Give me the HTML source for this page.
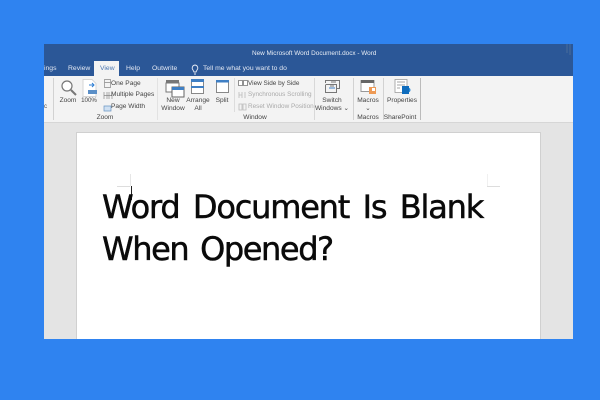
<!DOCTYPE html>
<html><head><meta charset="utf-8">
<style>
html,body{margin:0;padding:0}
body{width:600px;height:400px;overflow:hidden;background:#2f83f0;position:relative;font-family:"Liberation Sans",sans-serif}
div,svg{position:absolute}
.t{white-space:nowrap;font-size:6.6px;color:#444;line-height:8px;filter:blur(.25px)}
.c{text-align:center;transform:translateX(-50%)}
.g{color:#aaa}
.s{background:#d2d2d2;width:1px;top:78px;height:42px}
.tab{color:#e4e9f3;font-size:6.8px;top:65px;white-space:nowrap;line-height:8px;filter:blur(.25px)}
svg{filter:blur(.2px)}
</style></head><body>
<div id="w" style="left:44px;top:44px;width:529px;height:295px;background:#e4e4e4"></div>
<div style="left:44px;top:44px;width:529px;height:32px;background:#2b5797"></div>
<div style="left:566px;top:44px;width:2px;height:9px;background:#3a6299"></div>
<div style="left:569px;top:44px;width:2px;height:11px;background:#3a6299"></div>
<div class="t" style="left:252px;top:49px;color:#e8edf5;font-size:6.4px;line-height:9px">New Microsoft Word Document.docx  -  Word</div>
<div style="left:94px;top:61px;width:25px;height:15px;background:#f3f3f3"></div>
<div class="tab" style="left:44px">ings</div>
<div class="tab" style="left:68px">Review</div>
<div class="tab" style="left:100px;color:#4a76b0">View</div>
<div class="tab" style="left:126px">Help</div>
<div class="tab" style="left:152px">Outwrite</div>
<svg style="left:190px;top:64px" width="10" height="11" viewBox="0 0 10 11"><path d="M5 1a3 3 0 0 0-2 5l1 2h2l1-2a3 3 0 0 0-2-5zM4 10h2" fill="none" stroke="#e4e9f3" stroke-width=".9"/></svg>
<div class="tab" style="left:203px">Tell me what you want to do</div>
<div style="left:44px;top:76px;width:529px;height:46px;background:#f3f3f3;border-bottom:1px solid #d6d6d6"></div>
<div class="t" style="left:44px;top:103px;font-size:6px">c</div>
<div class="s" style="left:53px"></div><div class="s" style="left:157px;background:#e2e2e2"></div><div class="s" style="left:314px;background:#d8d8d8"></div><div class="s" style="left:353px"></div><div class="s" style="left:383px"></div><div class="s" style="left:420px;background:#bbb"></div>
<svg style="left:60px;top:79px" width="18" height="17" viewBox="0 0 18 17"><circle cx="7" cy="7" r="5" fill="#fff" stroke="#777" stroke-width="1.2"/><path d="M11 11l5 5" stroke="#777" stroke-width="2"/></svg>
<div class="t c" style="left:68px;top:97px">Zoom</div>
<svg style="left:82px;top:79px" width="16" height="18" viewBox="0 0 16 18"><path d="M1 .5h9l4 4v13H1z" fill="#fff" stroke="#ccc" stroke-width=".8"/><path d="M7 6h5M10 4l2 2-2 2" fill="none" stroke="#2b7cd3"/><rect x="6" y="11" width="9" height="4" fill="#5b8fc7"/></svg>
<div class="t c" style="left:89px;top:97px;font-size:6.2px">100%</div>
<svg style="left:102px;top:79px" width="12" height="34" viewBox="0 0 12 34"><path d="M2.500.5h6v8h-6zM2.500 3.500h6M2 13v7M5 13v7M7 13v7M10 13v7M2 16.500h8" fill="none" stroke="#888" stroke-width=".7"/><path d="M2 27h7v5H2z" fill="#cfe0f2" stroke="#6a95c4" stroke-width=".7"/></svg>
<div class="t" style="left:111px;top:80px">One Page</div>
<div class="t" style="left:111px;top:91px">Multiple Pages</div>
<div class="t" style="left:111px;top:103px">Page Width</div>
<div class="t c" style="left:105px;top:114px">Zoom</div>
<svg style="left:165px;top:79px" width="20" height="19" viewBox="0 0 20 19"><path d="M1 1h13v3H1z" fill="#777"/><path d="M1 4h13v9H1z" fill="#fff" stroke="#777"/><path d="M7 8h12v10H7z" fill="#fff" stroke="#666"/><path d="M7 8h12v3H7z" fill="#3f7fc4"/></svg>
<div class="t c" style="left:173px;top:97px">New<br>Window</div>
<svg style="left:191px;top:79px" width="14" height="15" viewBox="0 0 14 15"><path d="M.5.500h12v14H.5z" fill="#fff" stroke="#888"/><path d="M0 0h13v3H0zM0 7h13v2H0z" fill="#3f7fc4"/></svg>
<div class="t c" style="left:198px;top:97px">Arrange<br>All</div>
<svg style="left:216px;top:80px" width="13" height="13" viewBox="0 0 13 13"><path d="M.5.500h12v12H.5z" fill="#fff" stroke="#888"/><path d="M0 0h13v2.500H0z" fill="#3f7fc4"/></svg>
<div class="t c" style="left:222px;top:97px">Split</div>
<div class="s" style="left:234px;height:34px;background:#dcdcdc"></div>
<svg style="left:238px;top:80px" width="11" height="32" viewBox="0 0 11 32"><path d="M.5.500h4v5h-4zM5.500.500h4v5h-4z" fill="#fff" stroke="#777" stroke-width=".8"/><path d="M1 12v6M4 12v6M1 15h3M7 12v6M1 24h3v6H1zM5 24h3v6H5z" fill="none" stroke="#bbb" stroke-width=".8"/></svg>
<div class="t" style="left:248px;top:80px;font-size:6.4px">View Side by Side</div>
<div class="t g" style="left:248px;top:91px;font-size:6.4px">Synchronous Scrolling</div>
<div class="t g" style="left:248px;top:103px;font-size:6.4px">Reset Window Position</div>
<div class="t c" style="left:255px;top:114px">Window</div>
<svg style="left:325px;top:80px" width="16" height="13" viewBox="0 0 16 13"><path d="M.5 3V.5h14v8h-3M.5 5v7.500h11v-8h-11M5 6h4M6 2h5" fill="none" stroke="#777"/><path d="M4 8h6" stroke="#3f7fc4"/></svg>
<div class="t c" style="left:332px;top:97px">Switch<br>Windows ⌄</div>
<svg style="left:360px;top:80px" width="18" height="15" viewBox="0 0 18 15"><path d="M1 .5h13v11H1z" fill="#fff" stroke="#999"/><path d="M1 0h13v3H1z" fill="#666"/><rect x="9" y="7" width="7" height="7" fill="#ee9a55"/><rect x="12" y="8" width="3" height="3" fill="#fff"/></svg>
<div class="t c" style="left:368px;top:97px">Macros<br>⌄</div>
<div class="t c" style="left:368px;top:114px">Macros</div>
<svg style="left:394px;top:79px" width="17" height="16" viewBox="0 0 17 16"><path d="M1 .5h12v13H1z" fill="#fff" stroke="#999" stroke-width=".8"/><path d="M3 3h8M3 6h8M3 9h3" stroke="#888" stroke-width=".8"/><circle cx="14" cy="11" r="2.500" fill="#2b8bd8"/><rect x="8" y="7" width="7" height="8" fill="#0f6cbd"/></svg>
<div class="t c" style="left:402px;top:97px">Properties</div>
<div class="t c" style="left:400px;top:114px">SharePoint</div>
<div style="left:76px;top:132px;width:463px;height:206px;background:#fff;border:solid #d0d0d0;border-width:1px 1px 0 1px"></div>
<div style="left:117px;top:186px;width:13px;height:1px;background:#ddd"></div>
<div style="left:130px;top:174px;width:1px;height:12px;background:#e6e6e6"></div>
<div style="left:131px;top:186px;width:1px;height:14px;background:#222"></div>
<div style="left:487px;top:186px;width:13px;height:1px;background:#ddd"></div>
<div style="left:487px;top:174px;width:1px;height:12px;background:#f0f0f0"></div>
<div style="left:102px;top:186px;font-family:'DejaVu Sans',sans-serif;font-size:32px;line-height:42px;color:#0a0a0a;white-space:nowrap;letter-spacing:-1.2px;word-spacing:4.5px;-webkit-text-stroke:.5px #0a0a0a">Word Document Is Blank</div>
<div style="left:102px;top:228px;font-family:'DejaVu Sans',sans-serif;font-size:32px;line-height:42px;color:#0a0a0a;white-space:nowrap;letter-spacing:-1.4px;word-spacing:3px;-webkit-text-stroke:.5px #0a0a0a">When Opened?</div>
</body></html>
